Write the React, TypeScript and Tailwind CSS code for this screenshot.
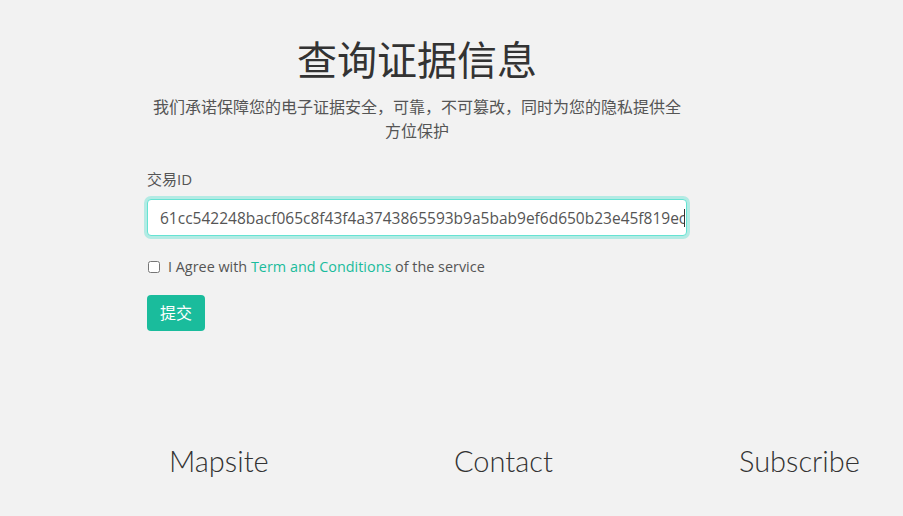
import { useState } from 'react'

const cjk = '"Segoe UI", "Open Sans", "Noto Sans CJK SC", sans-serif'

export default function App() {
    const [agree, setAgree] = useState(false)

    return (
        <div className="min-h-[516px] w-full overflow-hidden bg-[#f2f2f2] text-[#555]" style={{ fontFamily: cjk }}>
            <div className="ml-[147px] w-[540px] pt-[36px]">
                <h1 className="text-center text-[40px] leading-[48px] font-normal text-[#333]">查询证据信息</h1>
                <p className="mt-[11px] text-center text-[16px] leading-6 text-[#555]">
                    我们承诺保障您的电子证据安全，可靠，不可篡改，同时为您的隐私提供全方位保护
                </p>

                {/* Query form */}
                <form className="mt-[25px]" onSubmit={(e) => e.preventDefault()}>
                    <label className="block text-[15px] leading-[22px] text-[#555]">交易ID</label>
                    <div className="relative mt-[9px]">
                        <input
                            readOnly
                            defaultValue="61cc542248bacf065c8f43f4a3743865593b9a5bab9ef6d650b23e45f819ec"
                            className="h-[37px] w-full rounded-[4px] border border-[#66e3d3] bg-white pl-[12px] pr-[2px] text-[15.5px] text-[#555] outline-none shadow-[0_0_0_3px_rgba(102,227,211,0.45)]"
                        />
                        <span className="absolute right-[2px] top-[10px] h-[18px] w-px bg-[#333]" />
                    </div>

                    <label className="mt-[21px] flex items-center gap-[8px] text-[14.4px] leading-[20px]">
                        <input
                            type="checkbox"
                            checked={agree}
                            onChange={(e) => setAgree(e.target.checked)}
                            className="ml-px h-[12px] w-[12px]"
                        />
                        <span className="text-[#555]">
                            I Agree with <a href="#" className="text-[#1abc9c]">Term and Conditions</a> of the service
                        </span>
                    </label>

                    <button
                        type="submit"
                        className="mt-[18px] h-[36px] w-[58px] rounded-[4px] bg-[#1abc9c] text-[16px] text-white"
                    >
                        提交
                    </button>
                </form>
            </div>

            {/* Footer headings */}
            <div
                className="mt-[110px] ml-[154px] flex text-[29px] font-light leading-[40px] text-[#333]"
                style={{ fontFamily: 'Lato, "Open Sans", sans-serif' }}
            >
                <div className="w-[285px] shrink-0 px-[15px]">Mapsite</div>
                <div className="w-[285px] shrink-0 px-[15px]">Contact</div>
                <div className="w-[285px] shrink-0 whitespace-nowrap px-[15px]">Subscribe</div>
            </div>
        </div>
    )
}
